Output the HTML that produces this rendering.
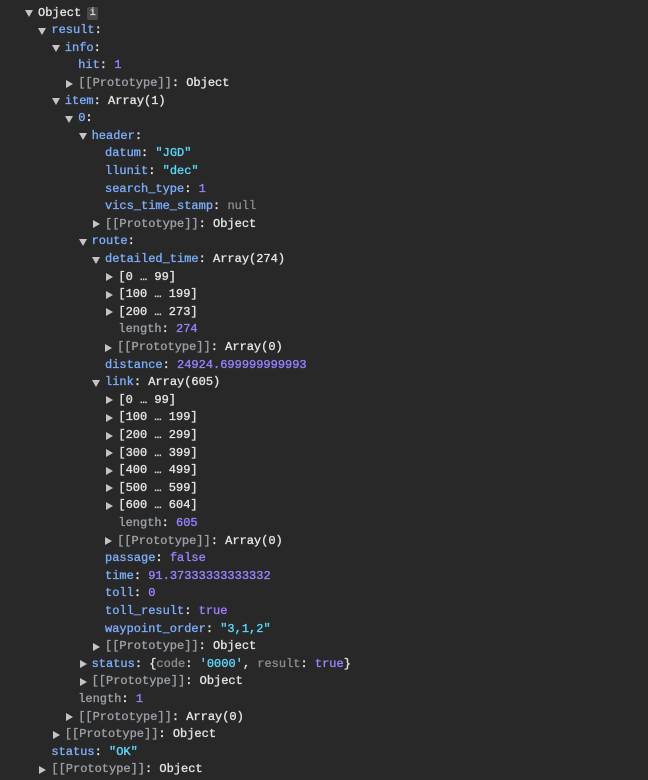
<!DOCTYPE html>
<html><head><meta charset="utf-8"><style>
body{margin:0;background:#282828;width:648px;height:780px;overflow:hidden;font-family:"Liberation Mono",monospace;font-size:12px;color:#e3e3e3;-webkit-text-stroke:0.35px}
.l{position:absolute;height:17.6px;line-height:17.6px;white-space:pre}
.a{position:absolute;width:0;height:0;-webkit-text-stroke:0}
.dn{border-left:4.5px solid transparent;border-right:4.5px solid transparent;border-top:7px solid #c4c4c4;top:5.5px;left:-13px}
.rt{border-top:4.5px solid transparent;border-bottom:4.5px solid transparent;border-left:7px solid #c4c4c4;top:4.5px;left:-12px}
.k{color:#7cacf8}.n{color:#9980ff}.s{color:#5cd5fb}.g{color:#8a8a8a}.p{color:#9aa0a6}
.i{display:inline-block;background:#4a4a4a;color:#ddd;font-size:10px;width:11px;height:13px;line-height:13px;text-align:center;border-radius:2px;vertical-align:1px;margin-left:6px}
</style></head><body>
<div id="c"></div>
<script>
var L=[
[0,'d','Object<span class="i">i</span>'],
[1,'d','<span class="k">result</span>:'],
[2,'d','<span class="k">info</span>:'],
[3,'','<span class="k">hit</span>: <span class="n">1</span>'],
[3,'r','<span class="p">[[Prototype]]</span>: Object'],
[2,'d','<span class="k">item</span>: Array(1)'],
[3,'d','<span class="k">0</span>:'],
[4,'d','<span class="k">header</span>:'],
[5,'','<span class="k">datum</span>: <span class="s">"JGD"</span>'],
[5,'','<span class="k">llunit</span>: <span class="s">"dec"</span>'],
[5,'','<span class="k">search_type</span>: <span class="n">1</span>'],
[5,'','<span class="k">vics_time_stamp</span>: <span class="g">null</span>'],
[5,'r','<span class="p">[[Prototype]]</span>: Object'],
[4,'d','<span class="k">route</span>:'],
[5,'d','<span class="k">detailed_time</span>: Array(274)'],
[6,'r','[0 … 99]'],
[6,'r','[100 … 199]'],
[6,'r','[200 … 273]'],
[6,'','<span class="p">length</span>: <span class="n">274</span>'],
[5.9,'r','<span class="p">[[Prototype]]</span>: Array(0)'],
[5,'','<span class="k">distance</span>: <span class="n">24924.699999999993</span>'],
[5,'d','<span class="k">link</span>: Array(605)'],
[6,'r','[0 … 99]'],
[6,'r','[100 … 199]'],
[6,'r','[200 … 299]'],
[6,'r','[300 … 399]'],
[6,'r','[400 … 499]'],
[6,'r','[500 … 599]'],
[6,'r','[600 … 604]'],
[6,'','<span class="p">length</span>: <span class="n">605</span>'],
[5.9,'r','<span class="p">[[Prototype]]</span>: Array(0)'],
[5,'','<span class="k">passage</span>: <span class="n">false</span>'],
[5,'','<span class="k">time</span>: <span class="n">91.37333333333332</span>'],
[5,'','<span class="k">toll</span>: <span class="n">0</span>'],
[5,'','<span class="k">toll_result</span>: <span class="n">true</span>'],
[5,'','<span class="k">waypoint_order</span>: <span class="s">"3,1,2"</span>'],
[5,'r','<span class="p">[[Prototype]]</span>: Object'],
[4,'r','<span class="k">status</span>: {<span class="g">code</span>: <span class="s">\'0000\'</span>, <span class="g">result</span>: <span class="n">true</span>}'],
[4,'r','<span class="p">[[Prototype]]</span>: Object'],
[3,'','<span class="p">length</span>: <span class="n">1</span>'],
[3,'r','<span class="p">[[Prototype]]</span>: Array(0)'],
[2,'r','<span class="p">[[Prototype]]</span>: Object'],
[1,'','<span class="k">status</span>: <span class="s">"OK"</span>'],
[1,'r','<span class="p">[[Prototype]]</span>: Object']
];
var h='';
L.forEach(function(r,i){
var x=38+13.4*r[0],y=4.6+17.6*i;
h+='<div class="l" style="left:'+x.toFixed(1)+'px;top:'+y.toFixed(1)+'px">'+(r[1]=='d'?'<span class="a dn"></span>':r[1]=='r'?'<span class="a rt"></span>':'')+r[2]+'</div>';
});
document.getElementById('c').innerHTML=h;
</script>
</body></html>
